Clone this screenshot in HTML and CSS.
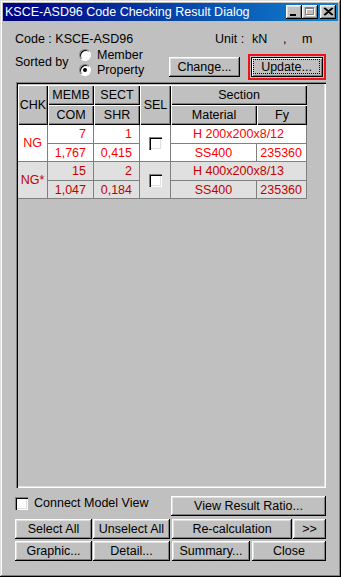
FILE: index.html
```html
<!DOCTYPE html>
<html lang="en">

<head>
    <meta charset="UTF-8">
    <meta name="viewport" content="width=device-width, initial-scale=1.0">
    <title>KSCE-ASD96 Code Checking Result Dialog</title>
    <link rel="stylesheet" href="styles.css">
</head>

<body>
    <div class="window">
        <div class="titlebar">
            <span class="title">KSCE-ASD96 Code Checking Result Dialog</span>
            <div class="title-buttons">
                <span class="tbtn">
                    <svg width="16" height="14" viewBox="0 0 16 14"><rect x="4" y="9" width="6" height="2" fill="#000"/></svg>
                </span>
                <span class="tbtn">
                    <svg width="16" height="14" viewBox="0 0 16 14">
                        <path d="M4.5 3.5h8v7h-8z M4.5 4.5h8" fill="none" stroke="#fff"/>
                        <path d="M3.5 2.5h8v7h-8z M3.5 3.5h8" fill="none" stroke="#808080"/>
                    </svg>
                </span>
                <span class="tbtn close">
                    <svg width="16" height="14" viewBox="0 0 16 14"><path d="M4 3l8 7M5 3l8 7M12 3l-8 7M13 3l-8 7" stroke="#000" stroke-width="1.2"/></svg>
                </span>
            </div>
        </div>

        <div class="content">
            <div class="info-row">
                <span class="code">Code : KSCE-ASD96</span>
                <span class="unit-label">Unit :</span>
                <span class="unit-force">kN</span>
                <span class="unit-sep">,</span>
                <span>m</span>
            </div>

            <div class="sort-row">
                <span class="sort-label">Sorted by</span>
                <div class="radios">
                    <div class="radio"><span class="radio-circle"></span>Member</div>
                    <div class="radio"><span class="radio-circle checked"></span>Property</div>
                </div>
                <button class="btn change-btn">Change...</button>
                <div class="default-frame">
                    <button class="btn default-btn"><span class="focus">Update...</span></button>
                </div>
            </div>

            <div class="grid-box">
                <div class="result-grid">
                    <div class="head span-r2">CHK</div>
                    <div class="head">MEMB</div>
                    <div class="head">SECT</div>
                    <div class="head span-r2">SEL</div>
                    <div class="head span-c2">Section</div>
                    <div class="head">COM</div>
                    <div class="head">SHR</div>
                    <div class="head">Material</div>
                    <div class="head">Fy</div>

                    <div class="cell ok span-r2 center">NG</div>
                    <div class="cell ok num">7</div>
                    <div class="cell ok num">1</div>
                    <div class="cell ok span-r2 center"><span class="check"></span></div>
                    <div class="cell ok span-c2 center">H&nbsp;200x200x8/12</div>
                    <div class="cell ok num">1,767</div>
                    <div class="cell ok num">0,415</div>
                    <div class="cell ok center">SS400</div>
                    <div class="cell ok num fy">235360</div>

                    <div class="cell alt span-r2 center">NG*</div>
                    <div class="cell alt num">15</div>
                    <div class="cell alt num">2</div>
                    <div class="cell alt span-r2 center"><span class="check"></span></div>
                    <div class="cell alt span-c2 center">H&nbsp;400x200x8/13</div>
                    <div class="cell alt num">1,047</div>
                    <div class="cell alt num">0,184</div>
                    <div class="cell alt center">SS400</div>
                    <div class="cell alt num fy">235360</div>
                </div>
            </div>

            <div class="bottom-row">
                <div class="connect"><span class="check"></span>Connect Model View</div>
                <button class="btn ratio-btn">View Result Ratio...</button>
            </div>

            <div class="btn-row">
                <button class="btn w77">Select All</button>
                <button class="btn w77 gap1">Unselect All</button>
                <button class="btn w120 gap2">Re-calculation</button>
                <button class="btn w33 gap1">&gt;&gt;</button>
            </div>
            <div class="btn-row">
                <button class="btn w77">Graphic...</button>
                <button class="btn w77 gap1">Detail...</button>
                <button class="btn w78 gap2">Summary...</button>
                <button class="btn w74 gap2">Close</button>
            </div>
        </div>
    </div>
</body>

</html>
```

FILE: styles.css
```css
body {
    margin: 0;
    background: #c0c0c0;
    font-family: 'Liberation Sans', Arial, sans-serif;
    font-size: 12.5px;
    line-height: 14px;
    color: #000;
}

.window {
    width: 341px;
    height: 577px;
    box-sizing: border-box;
    padding: 3px;
    background: #c0c0c0;
    box-shadow: inset -1px -1px #000, inset 1px 1px #dfdfdf, inset -2px -2px #808080, inset 2px 2px #fff;
}

.titlebar {
    height: 18px;
    display: flex;
    align-items: center;
    justify-content: space-between;
    padding: 0 2px;
    background: linear-gradient(90deg, #000080, #1084d0);
    color: #fff;
}

.title {
    white-space: nowrap;
}

.title-buttons {
    display: flex;
}

.tbtn {
    width: 16px;
    height: 14px;
    display: block;
    background: #c0c0c0;
    box-shadow: inset -1px -1px #000, inset 1px 1px #fff, inset -2px -2px #808080, inset 2px 2px #dfdfdf;
}

.tbtn svg {
    display: block;
}

.tbtn.close {
    margin-left: 2px;
}

.content {
    padding: 0 12px;
}

/* code / unit line */
.info-row {
    display: flex;
    margin-top: 11px;
    height: 14px;
    white-space: nowrap;
}

.code {
    width: 200px;
}

.unit-label {
    width: 37px;
}

.unit-force {
    width: 31px;
}

.unit-sep {
    width: 19px;
}

/* sort line */
.sort-row {
    display: flex;
    align-items: flex-start;
    margin-top: 2px;
    height: 34px;
}

.sort-label {
    width: 64px;
    margin-top: 7px;
}

.radios {
    width: 90px;
    display: flex;
    flex-direction: column;
    gap: 1px;
}

.radio {
    display: flex;
    align-items: center;
    gap: 6px;
    height: 14px;
}

.radio-circle {
    width: 12px;
    height: 12px;
    box-sizing: border-box;
    border-radius: 50%;
    background: #fff;
    border: 1px solid;
    border-color: #808080 #fff #fff #808080;
    box-shadow: inset 1px 1px 0 #000;
    display: flex;
    align-items: center;
    justify-content: center;
}

.radio-circle.checked::after {
    content: "";
    width: 4px;
    height: 4px;
    border-radius: 50%;
    background: #000;
}

.btn {
    font: inherit;
    color: #000;
    background: #c0c0c0;
    border: none;
    padding: 0;
    height: 20px;
    display: flex;
    align-items: center;
    justify-content: center;
    white-space: nowrap;
    box-shadow: inset -1px -1px #000, inset 1px 1px #fff, inset -2px -2px #808080, inset 2px 2px #dfdfdf;
}

.change-btn {
    width: 71px;
    margin-top: 9px;
}

.default-frame {
    width: 78px;
    height: 26px;
    box-sizing: border-box;
    margin-top: 6px;
    margin-left: 8px;
    border: 2px solid #f01018;
    padding: 1px;
}

.default-btn {
    width: 100%;
    box-shadow: inset 0 0 0 1px #000, inset 2px 2px #fff, inset -2px -2px #808080;
    align-items: stretch;
}

.focus {
    flex: 1;
    margin: 2px 3px 3px 2px;
    border: 1px dotted #000;
    display: flex;
    align-items: center;
    justify-content: center;
}

/* result grid */
.grid-box {
    margin-left: 1px;
    width: 310px;
    height: 406px;
    box-sizing: border-box;
    padding: 3px 2px 2px 2px;
    box-shadow: inset 1px 1px #808080, inset 2px 2px #000, inset -1px -1px #fff, inset -2px -2px #dfdfdf;
}

.result-grid {
    display: grid;
    grid-template-columns: 30px 46px 46px 31px 86px 50px;
    grid-template-rows: 20px 20px 19px 18px 19px 18px;
}

.span-r2 {
    grid-row: span 2;
}

.span-c2 {
    grid-column: span 2;
}

.head {
    display: flex;
    align-items: center;
    justify-content: center;
    box-shadow: inset 1px 1px #fff, inset -1px -1px #000, inset -2px -2px #808080;
}

.cell {
    display: flex;
    align-items: center;
    box-sizing: border-box;
    border-right: 1px solid #808080;
    border-bottom: 1px solid #808080;
    white-space: nowrap;
}

.cell.ok {
    background: #fff;
    color: #ff0000;
}

.cell.alt {
    background: #e0e0e0;
    color: #c00000;
}

.center {
    justify-content: center;
}

.num {
    justify-content: flex-end;
    padding-right: 7px;
}

.num.fy {
    padding-right: 4px;
}

.check {
    width: 13px;
    height: 13px;
    box-sizing: border-box;
    background: #fff;
    box-shadow: inset 1px 1px #808080, inset 2px 2px #000, inset -1px -1px #fff, inset -2px -2px #dfdfdf;
}

/* bottom controls */
.bottom-row {
    display: flex;
    align-items: flex-start;
    margin-top: 8px;
    height: 20px;
}

.connect {
    display: flex;
    align-items: flex-start;
    gap: 6px;
}

.connect .check {
    margin-top: 1px;
}

.ratio-btn {
    width: 155px;
    margin-left: auto;
}

.btn-row {
    display: flex;
    margin-top: 3px;
}

.btn-row + .btn-row {
    margin-top: 2px;
}

.w77 { width: 77px; }
.w120 { width: 120px; }
.w33 { width: 33px; }
.w78 { width: 78px; }
.w74 { width: 74px; }

.gap1 { margin-left: 1px; }
.gap2 { margin-left: 2px; }
```
